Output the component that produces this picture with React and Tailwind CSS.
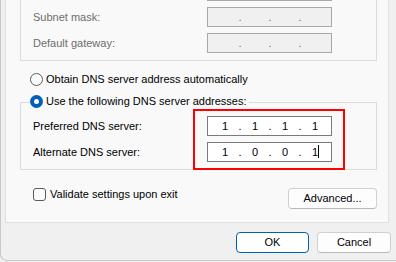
import React from "react";

const ui = { fontFamily: '"Liberation Sans", Arial, sans-serif' };
const classic = { fontFamily: '"Liberation Sans", Arial, sans-serif' };

function IpBox({ values, disabled, caret, blank }) {
  const parts = values || ["", "", "", ""];
  return (
    <div
      className={`flex items-center w-[125px] h-[20px] pl-[6px] border ${
        disabled ? "bg-[#f0f0f0] border-[#a8a8a8]" : "bg-white border-[#7a7a7a]"
      }`}
      style={classic}
    >
      {!blank &&
        parts.map((v, i) => (
          <React.Fragment key={i}>
            <div className="w-[22px] flex justify-center text-[11px] text-black leading-none relative">
              {v}
              {caret && i === 3 && <span className="absolute left-[14px] top-[-2px] w-px h-[13px] bg-black" />}
            </div>
            {i < 3 && (
              <div
                className={`w-[8px] flex justify-center text-[11px] leading-none ${
                  disabled ? "text-[#6d6d6d]" : "text-black"
                }`}
              >
                .
              </div>
            )}
          </React.Fragment>
        ))}
    </div>
  );
}

function Row({ label, disabled, children }) {
  return (
    <div className="flex items-center h-[26px]">
      <div
        className={`w-[186px] pl-[12px] text-[11px] ${disabled ? "text-[#6d6d6d]" : "text-black"}`}
        style={classic}
      >
        {label}
      </div>
      {children}
    </div>
  );
}

function Radio({ checked, label }) {
  return (
    <div className="flex items-center gap-[3px] bg-[#f9f9f9] pr-[2px]">
      {checked ? (
        <span className="w-[13px] h-[13px] rounded-full bg-[#005fb8] flex items-center justify-center">
          <span className="w-[5px] h-[5px] rounded-full bg-white" />
        </span>
      ) : (
        <span className="w-[13px] h-[13px] rounded-full border border-[#5b5b5b] bg-[#fbfbfb]" />
      )}
      <span className="text-[11px] text-black leading-none" style={ui}>
        {label}
      </span>
    </div>
  );
}

export default function App() {
  return (
    <div className="w-[396px] h-[262px] bg-[#f0f0f0] overflow-hidden">
      <div className="h-[261px] border-l border-b border-[#c8c8c8] rounded-bl-[7px] relative">
        {/* tab page */}
        <div className="ml-[4px] w-[384px] h-[223px] bg-[#f9f9f9] border-l border-r border-b border-[#e0e0e0] relative">
          {/* IP groupbox (bottom part) */}
          <div className="ml-[14px] w-[357px] h-[61px] border-l border-r border-b border-[#dcdcdc] overflow-hidden">
            <div className="mt-[-22px]">
              <Row label="" disabled>
                <IpBox disabled blank />
              </Row>
              <Row label="Subnet mask:" disabled>
                <IpBox disabled />
              </Row>
              <Row label="Default gateway:" disabled>
                <IpBox disabled />
              </Row>
            </div>
          </div>

          <div className="ml-[24px] mt-[12px] flex">
            <Radio label="Obtain DNS server address automatically" />
          </div>

          {/* DNS groupbox */}
          <div className="ml-[14px] mt-[16px] w-[357px] h-[68px] border border-[#dcdcdc] relative">
            <div className="absolute left-[9px] top-[-8px]">
              <Radio checked label="Use the following DNS server addresses:" />
            </div>
            <div className="pt-[10px]">
              <Row label="Preferred DNS server:">
                <IpBox values={["1", "1", "1", "1"]} />
              </Row>
              <Row label="Alternate DNS server:">
                <IpBox values={["1", "0", "0", "1"]} caret />
              </Row>
            </div>
          </div>

          <div className="ml-[27px] mt-[18px] flex items-start justify-between pr-[11px]">
            <div className="flex items-center gap-[4px]">
              <span className="w-[13px] h-[13px] rounded-[3px] border border-[#5b5b5b] bg-[#fbfbfb]" />
              <span className="text-[11px] text-black leading-none" style={ui}>
                Validate settings upon exit
              </span>
            </div>
            <button
              className="w-[89px] h-[21px] rounded-[4px] border border-[#d0d0d0] border-b-[#b8b8b8] bg-[#fdfdfd] text-[11px] text-black"
              style={ui}
            >
              Advanced...
            </button>
          </div>

          {/* red highlight */}
          <div className="absolute left-[187px] top-[109px] w-[152px] h-[61px] border-2 border-[#ff0000]" />
        </div>

        <div className="flex justify-end gap-[8px] pr-[5px] mt-[9px]">
          <button
            className="w-[73px] h-[21px] rounded-[4px] border border-[#005fb8] bg-white text-[11px] text-black"
            style={ui}
          >
            OK
          </button>
          <button
            className="w-[74px] h-[21px] rounded-[4px] border border-[#d0d0d0] border-b-[#b8b8b8] bg-[#fdfdfd] text-[11px] text-black"
            style={ui}
          >
            Cancel
          </button>
        </div>
      </div>
    </div>
  );
}
